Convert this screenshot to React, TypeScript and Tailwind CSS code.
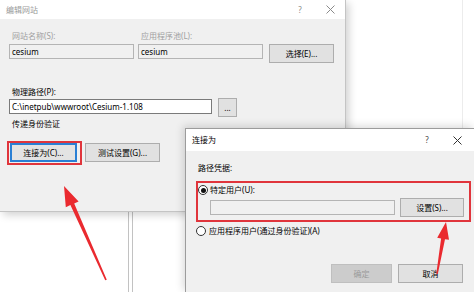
import React from 'react';

const font = { fontFamily: '"Noto Sans", "Noto Sans CJK SC", sans-serif' };

function CloseGlyph({ color = '#555' }: { color?: string }) {
  return (
    <svg width="9" height="9" viewBox="0 0 9 9">
      <path d="M0.5 0.5 L8.5 8.5 M8.5 0.5 L0.5 8.5" stroke={color} strokeWidth="1" fill="none" />
    </svg>
  );
}

function Btn({
  children,
  className = '',
}: {
  children: React.ReactNode;
  className?: string;
}) {
  return (
    <div
      className={
        'h-[19px] flex items-center justify-center border border-[#adadad] bg-[#e1e1e1] text-black ' +
        className
      }
    >
      {children}
    </div>
  );
}

function Radio({ checked }: { checked?: boolean }) {
  return (
    <div className="w-[10px] h-[10px] rounded-full border border-[#333] bg-white flex items-center justify-center shrink-0">
      {checked && <div className="w-[5px] h-[5px] rounded-full bg-[#111]" />}
    </div>
  );
}

function EditSiteDialog() {
  return (
    <div className="absolute left-0 top-0 w-[346px] h-[212px] border-r border-b border-[#c4c4c4] shadow-[3px_3px_8px_rgba(0,0,0,0.18)] flex flex-col">
      <div className="h-[19px] bg-white flex items-center">
        <span className="pl-[6px] text-[#9a9a9a]">编辑网站</span>
        <div className="ml-auto flex items-center">
          <span className="w-[30px] text-center text-[#8a8a8a]">?</span>
          <span className="w-[30px] flex justify-center">
            <CloseGlyph color="#8a8a8a" />
          </span>
        </div>
      </div>
      <div className="flex-1 bg-[#f0f0f0] pl-[9px] pt-[11px]">
        <div className="flex h-[12px] leading-[12px] text-[#a0a0a0]">
          <span className="w-[125px] pl-[3px]">网站名称(S):</span>
          <span className="ml-[4px] w-[125px] pl-[3px]">应用程序池(L):</span>
        </div>
        <div className="mt-[2px] flex items-start">
          <div className="w-[125px] h-[15px] border border-[#b4b4b4] bg-[#f0f0f0] flex items-center pl-[2px]">
            cesium
          </div>
          <div className="ml-[4px] w-[125px] h-[15px] border border-[#b4b4b4] bg-[#f0f0f0] flex items-center pl-[2px]">
            cesium
          </div>
          <Btn className="ml-[6px] w-[65px]">选择(E)...</Btn>
        </div>
        <div className="mt-[23px] h-[12px] leading-[12px] pl-[3px]">物理路径(P):</div>
        <div className="flex items-start">
          <div className="mt-[1px] w-[203px] h-[15px] border border-[#7a7a7a] bg-white flex items-center pl-[2px]">
            C:\inetpub\wwwroot\Cesium-1.108
          </div>
          <Btn className="ml-[6px] w-[19px]">...</Btn>
        </div>
        <div className="mt-[1px] h-[12px] leading-[12px] pl-[3px]">传递身份验证</div>
        <div className="mt-[11px] flex items-start">
          <div className="-ml-[2px] border-2 border-[#e0353c] pl-[1px] pr-[3px] pb-[1px]">
            <div className="w-[67px] h-[19px] flex items-center justify-center border-2 border-[#2a7fd4] bg-[#e3e3e3]">
              连接为(C)...
            </div>
          </div>
          <Btn className="ml-[3px] mt-[2px] w-[75px]">测试设置(G)...</Btn>
        </div>
      </div>
    </div>
  );
}

function ConnectAsDialog() {
  return (
    <div className="absolute left-[185px] top-[128px] w-[289px] h-[164px] border-t border-l border-[#9c9c9c] shadow-[-2px_-2px_8px_rgba(0,0,0,0.15)] flex flex-col">
      <div className="h-[22px] bg-white flex items-center">
        <span className="pl-[6px] text-black">连接为</span>
        <div className="ml-auto flex items-center pr-[2px]">
          <span className="w-[30px] text-center text-[#444]">?</span>
          <span className="w-[30px] flex justify-center">
            <CloseGlyph color="#333" />
          </span>
        </div>
      </div>
      <div className="flex-1 bg-[#f0f0f0] pt-[11px]">
        <div className="pl-[12px] h-[12px] leading-[12px]">路径凭据:</div>
        <div className="mt-[7px] ml-[10px] w-[275px] border-2 border-[#e0353c] pt-[1px] pb-[3px]">
          <div className="flex items-center h-[12px] leading-[12px]">
            <Radio checked />
            <span className="ml-[2px]">特定用户(U):</span>
          </div>
          <div className="mt-[2px] flex items-start">
            <div className="ml-[12px] mt-[2px] w-[185px] h-[15px] border border-[#b4b4b4] bg-[#f0f0f0]" />
            <Btn className="ml-[5px] w-[64px]">设置(S)...</Btn>
          </div>
        </div>
        <div className="mt-[3px] ml-[10px] flex items-center h-[12px] leading-[12px]">
          <Radio />
          <span className="ml-[3px]">应用程序用户(通过身份验证)(A)</span>
        </div>
        <div className="mt-[27px] flex justify-end gap-[6px] pr-[11px]">
          <div className="w-[61px] h-[19px] flex items-center justify-center border border-[#bfbfbf] bg-[#cccccc] text-[#9a9a9a]">
            确定
          </div>
          <Btn className="w-[65px]">取消</Btn>
        </div>
      </div>
    </div>
  );
}

function Arrows() {
  return (
    <svg className="absolute inset-0 pointer-events-none" width="474" height="292" viewBox="0 0 474 292">
      <polygon
        points="64,186 78.6,201.4 74.2,203.4 106.8,279.7 105.2,280.3 70.4,205.1 65.8,207.2"
        fill="#ea2a2f"
      />
      <polygon
        points="446,222 449,239.7 445,239.2 437.8,274 436.3,273.8 441.1,238.4 437.2,237.7"
        fill="#ea2a2f"
      />
    </svg>
  );
}

export default function App() {
  return (
    <div className="relative w-[474px] h-[292px] overflow-hidden bg-white text-[8px] text-black" style={font}>
      <div className="absolute inset-0 flex">
        <div className="w-[129px] border-r border-[#c2c2c2]" />
        <div className="w-[4px] border-r border-[#c2c2c2]" />
        <div className="w-[330px] border-r border-[#ececec]" />
      </div>
      <EditSiteDialog />
      <ConnectAsDialog />
      <Arrows />
    </div>
  );
}
